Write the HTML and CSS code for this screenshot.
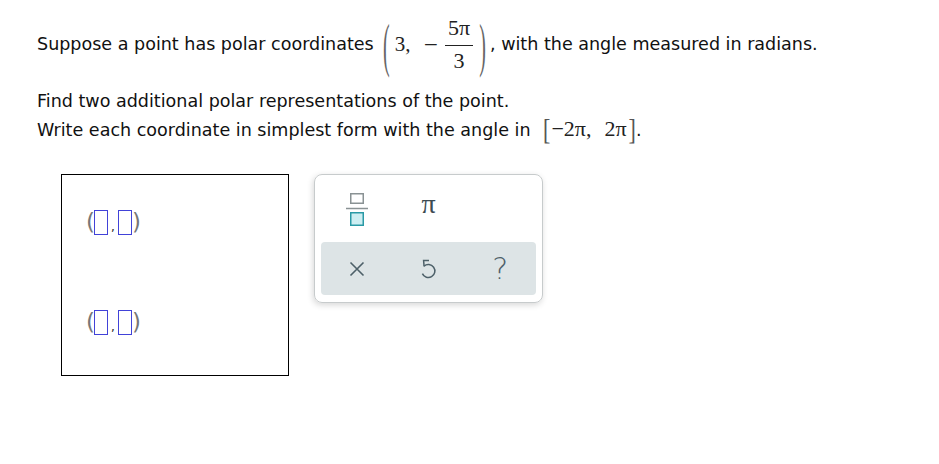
FILE: index.html
```html
<!DOCTYPE html>
<html lang="en">
<head>
    <meta charset="UTF-8">
    <title>Polar coordinates</title>
    <link rel="stylesheet" href="styles.css">
</head>
<body>
    <div class="question">
        <p class="line first">
            <span>Suppose a point has polar coordinates</span>
            <span class="math big">
                <span class="paren">(</span>
                <span class="num">3,</span>
                <span class="minus">&minus;</span>
                <span class="frac"><span class="top">5&pi;</span><span class="bot">3</span></span>
                <span class="paren">)</span>
            </span>
            <span>, with the angle measured in radians.</span>
        </p>
        <p class="line">Find two additional polar representations of the point.</p>
        <p class="line">Write each coordinate in simplest form with the angle in <span class="math interval"><span class="brk">[</span>&minus;2&pi;,<span class="gap"></span>2&pi;<span class="brk">]</span></span>.</p>
    </div>

    <div class="work">
        <div class="answers">
            <div class="pair"><span class="p">(</span><span class="slot"></span><span class="comma">,</span><span class="slot"></span><span class="p">)</span></div>
            <div class="pair"><span class="p">(</span><span class="slot"></span><span class="comma">,</span><span class="slot"></span><span class="p">)</span></div>
        </div>

        <div class="palette">
            <div class="keys">
                <button class="key">
                    <svg width="22" height="34" viewBox="0 0 22 34">
                        <rect x="4.75" y="1.75" width="12.5" height="9.5" fill="#fff" stroke="#8a9294" stroke-width="1.5"/>
                        <line x1="0" y1="16.5" x2="22" y2="16.5" stroke="#8a9294" stroke-width="1.5"/>
                        <rect x="4.75" y="20.75" width="12.5" height="12.5" fill="#cdeef2" stroke="#2a9aa6" stroke-width="1.5"/>
                    </svg>
                </button>
                <button class="key pi">&pi;</button>
            </div>
            <div class="tools">
                <button class="tool">
                    <svg width="16" height="16" viewBox="0 0 16 16"><path d="M1.5 1.5 L14.5 14.5 M14.5 1.5 L1.5 14.5" stroke="#4d6069" stroke-width="1.6" fill="none"/></svg>
                </button>
                <button class="tool">
                    <svg width="18" height="21" viewBox="0 0 18 21"><path d="M5 8.2 A6.5 6.5 0 1 1 3.4 15.6" stroke="#4d6069" stroke-width="1.5" fill="none"/><path d="M10 2.6 H4.6 L5.1 8.4" stroke="#4d6069" stroke-width="1.5" fill="none"/></svg>
                </button>
                <button class="tool help">?</button>
            </div>
        </div>
    </div>
</body>
</html>
```

FILE: styles.css
```css
* { margin: 0; padding: 0; box-sizing: border-box; }
body { background: #fff; color: #111; font-family: 'DejaVu Sans', Verdana, sans-serif; font-size: 17.55px; }
.question { padding: 14px 0 0 37px; }
.line { line-height: 27px; height: 27px; white-space: nowrap; }
.line.first { display: flex; align-items: center; height: 60px; margin-bottom: 14px; }
.math { font-family: 'Liberation Serif', 'Times New Roman', serif; color: #222; }
.big { display: inline-flex; align-items: center; margin-left: 5px; font-size: 21px; }
.paren { display: inline-block; width: 15px; text-align: center; font-size: 20px; line-height: 20px; color: #666; transform: scaleY(3); }
.num { margin-left: 1px; width: 16px; }
.minus { margin: 0 7px 0 13px; font-size: 25px; }
.frac { display: inline-flex; flex-direction: column; align-items: center; font-size: 22px; line-height: 22px; margin-right: 2px; }
.frac .top { border-bottom: 1px solid #222; padding: 0 3px 6px; }
.frac .bot { padding-top: 4px; }
.interval { font-size: 22px; margin-left: 7px; }
.brk { display: inline-block; font-size: 22px; color: #555; transform: scaleY(1.35); }
.brk:first-child { margin-right: 1px; }
.brk:last-child { margin-left: 2px; }
.gap { display: inline-block; width: 13px; }

.work { display: flex; align-items: flex-start; gap: 25px; margin: 32px 0 0 61px; }
.answers { width: 228px; height: 202px; border: 1px solid #000; padding: 35px 0 0 24px; display: flex; flex-direction: column; gap: 75px; }
.pair { display: flex; align-items: center; height: 25px; }
.pair .p { font-family: 'DejaVu Sans', sans-serif; font-size: 23px; color: #777; line-height: 25px; width: 8px; }
.slot { width: 14px; height: 25px; border: 1.5px solid #4142d8; }
.comma { font-size: 12px; color: #222; width: 10px; text-align: center; align-self: flex-end; line-height: 16px; }

.palette { width: 229px; height: 129px; border: 1px solid #c7cbcc; border-radius: 8px; box-shadow: -1px 2px 6px rgba(0,0,0,0.16); padding: 0 6px 7px; display: flex; flex-direction: column; }
.keys { display: grid; grid-template-columns: repeat(3, 1fr); height: 67px; align-items: center; }
.key { background: none; border: none; height: 40px; display: flex; justify-content: center; align-items: center; }
.key.pi { font-family: 'Liberation Serif', serif; font-size: 28px; color: #3d4b52; padding-bottom: 9px; }
.tools { flex: 1; background: #dde4e6; border-radius: 4px; display: grid; grid-template-columns: repeat(3, 1fr); align-items: center; }
.tool { background: none; border: none; height: 30px; display: flex; justify-content: center; align-items: center; }
.tool.help { font-family: 'DejaVu Sans', sans-serif; font-size: 30px; color: #4d6069; font-weight: 200; }
```
